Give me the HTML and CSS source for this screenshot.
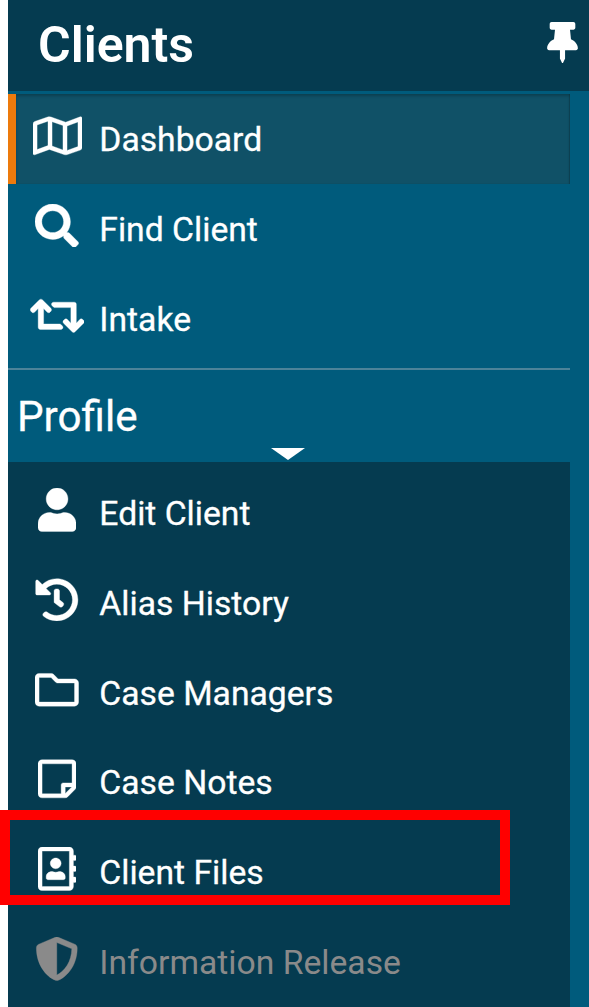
FILE: index.html
```html
<!DOCTYPE html>
<html lang="en">
<head>
<meta charset="utf-8">
<title>Clients</title>
<link rel="stylesheet" href="styles.css">
</head>
<body>
<nav class="sidebar">
  <header class="header">
    <h1 class="title">Clients</h1>
    <svg class="pin" viewBox="0 0 384 512"><path d="M298.028 214.267L285.793 96H328c13.255 0 24-10.745 24-24V24c0-13.255-10.745-24-24-24H56C42.745 0 32 10.745 32 24v48c0 13.255 10.745 24 24 24h42.207L85.972 214.267C37.465 236.82 0 277.261 0 328c0 13.255 10.745 24 24 24h136v104.007c0 1.242.289 2.467.845 3.578l24 48c2.941 5.882 11.364 5.893 14.311 0l24-48a8.008 8.008 0 0 0 .845-3.578V352h136c13.255 0 24-10.745 24-24-.001-51.183-37.983-91.42-85.973-113.733z"/></svg>
  </header>
  <div class="menu">
    <a class="item active"><span class="icon"><svg viewBox="0 0 576 512"><path d="M560.02 32c-1.96 0-3.98.37-5.96 1.16L384.01 96H384L212 35.28A64.252 64.252 0 0 0 191.76 32c-6.69 0-13.37 1.05-19.81 3.14L20.12 87.95A32.006 32.006 0 0 0 0 117.66v346.32C0 473.17 7.53 480 15.99 480c1.96 0 3.97-.37 5.96-1.16L192 416l172 60.71a63.98 63.98 0 0 0 40.05.15l151.83-52.81A31.996 31.996 0 0 0 576 394.34V48.02c0-9.19-7.53-16.02-15.98-16.02zM224 90.42l128 45.19v285.97l-128-45.19V90.42zM48 418.05V129.07l128-44.53v286.2l-.64.23L48 418.05zm480-35.13l-128 44.53V141.26l.64-.24L528 93.95v288.97z"/></svg></span><span class="label">Dashboard</span></a>
    <a class="item"><span class="icon"><svg viewBox="0 0 512 512"><path d="M505 442.7L405.3 343c-4.5-4.5-10.6-7-17-7H372c27.6-35.3 44-79.7 44-128C416 93.1 322.9 0 208 0S0 93.1 0 208s93.1 208 208 208c48.3 0 92.7-16.4 128-44v16.3c0 6.4 2.5 12.5 7 17l99.7 99.7c9.4 9.4 24.6 9.4 33.9 0l28.3-28.3c9.4-9.4 9.4-24.6.1-34zM208 336c-70.7 0-128-57.2-128-128 0-70.7 57.2-128 128-128 70.7 0 128 57.2 128 128 0 70.7-57.2 128-128 128z"/></svg></span><span class="label">Find Client</span></a>
    <a class="item"><span class="icon"><svg viewBox="0 0 640 512"><path d="M629.657 343.598L528.971 444.284c-9.373 9.372-24.568 9.372-33.941 0L394.343 343.598c-9.373-9.373-9.373-24.569 0-33.941l10.823-10.823c9.562-9.562 25.133-9.34 34.419.492L480 342.118V160H292.451a24.005 24.005 0 0 1-16.971-7.029l-16-16C244.361 121.851 255.069 96 276.451 96H520c13.255 0 24 10.745 24 24v222.118l40.416-42.792c9.285-9.831 24.856-10.054 34.419-.492l10.823 10.823c9.372 9.372 9.372 24.569-.001 33.941zm-265.138 15.431A23.999 23.999 0 0 0 347.548 352H160V169.881l40.416 42.792c9.286 9.831 24.856 10.054 34.419.491l10.822-10.822c9.373-9.373 9.373-24.569 0-33.941L144.971 67.716c-9.373-9.373-24.569-9.373-33.941 0L10.343 168.402c-9.373 9.373-9.373 24.569 0 33.941l10.822 10.822c9.562 9.562 25.133 9.34 34.419-.491L96 169.881V392c0 13.255 10.745 24 24 24h243.549c21.382 0 32.09-25.851 16.971-40.971l-16.001-16z"/></svg></span><span class="label">Intake</span></a>
    <section class="section">
      <h2 class="section-title">Profile</h2>
      <svg class="caret" viewBox="0 0 34 12"><path d="M0 0H34L17 12z"/></svg>
    </section>
    <div class="submenu">
      <a class="item"><span class="icon"><svg viewBox="0 0 448 512"><path d="M224 256c70.7 0 128-57.3 128-128S294.7 0 224 0 96 57.3 96 128s57.3 128 128 128zm89.6 32h-16.7c-22.2 10.2-46.9 16-72.9 16s-50.6-5.8-72.9-16h-16.7C60.2 288 0 348.2 0 422.4V464c0 26.5 21.5 48 48 48h352c26.5 0 48-21.5 48-48v-41.6c0-74.2-60.2-134.4-134.4-134.4z"/></svg></span><span class="label">Edit Client</span></a>
      <a class="item"><span class="icon"><svg viewBox="0 0 512 512"><path d="M504 255.531c.253 136.64-111.18 248.372-247.82 248.468-59.015.042-113.223-20.53-155.822-54.911-11.077-8.94-11.905-25.541-1.839-35.607l11.267-11.267c8.609-8.609 22.353-9.551 31.891-1.984C173.062 425.135 212.781 440 256 440c101.705 0 184-82.311 184-184 0-101.705-82.311-184-184-184-48.814 0-93.149 18.969-126.068 49.932l50.754 50.754c10.08 10.08 2.941 27.314-11.313 27.314H24c-8.837 0-16-7.163-16-16V38.627c0-14.254 17.234-21.393 27.314-11.314l49.372 49.372C129.209 34.136 189.552 8 256 8c136.81 0 247.747 110.78 248 247.531zm-180.912 78.784l9.823-12.63c8.138-10.463 6.253-25.542-4.21-33.679L288 256.349V152c0-13.255-10.745-24-24-24h-16c-13.255 0-24 10.745-24 24v135.651l65.409 50.874c10.463 8.137 25.541 6.253 33.679-4.21z"/></svg></span><span class="label">Alias History</span></a>
      <a class="item"><span class="icon"><svg viewBox="0 0 512 512"><path d="M464 128H272l-54.63-54.63c-6-6-14.14-9.37-22.63-9.37H48C21.49 64 0 85.49 0 112v288c0 26.51 21.49 48 48 48h416c26.51 0 48-21.49 48-48V176c0-26.51-21.49-48-48-48zm0 272H48V112h140.12l54.63 54.63c6 6 14.14 9.37 22.63 9.37H464v224z"/></svg></span><span class="label">Case Managers</span></a>
      <a class="item"><span class="icon"><svg viewBox="0 0 448 512"><path d="M448 348.106V80c0-26.51-21.49-48-48-48H48C21.49 32 0 53.49 0 80v351.988c0 26.51 21.49 48 48 48h268.118a48 48 0 0 0 33.941-14.059l83.882-83.882A48 48 0 0 0 448 348.106zm-128 80.005v-76.118h76.118L320 428.111zM400 80v223.988H296c-13.255 0-24 10.745-24 24v104H48V80h352z"/></svg></span><span class="label">Case Notes</span></a>
      <a class="item"><span class="icon"><svg viewBox="0 0 448 512"><path d="M436 160c6.6 0 12-5.4 12-12v-40c0-6.6-5.4-12-12-12h-20V48c0-26.5-21.5-48-48-48H48C21.5 0 0 21.5 0 48v416c0 26.5 21.5 48 48 48h320c26.5 0 48-21.5 48-48v-48h20c6.6 0 12-5.4 12-12v-40c0-6.6-5.4-12-12-12h-20v-64h20c6.6 0 12-5.4 12-12v-40c0-6.6-5.4-12-12-12h-20v-64h20zm-68 304H48V48h320v416zM208 256c35.3 0 64-28.7 64-64s-28.7-64-64-64-64 28.7-64 64 28.7 64 64 64zm-89.6 128h179.2c12.4 0 22.4-8.6 22.4-19.2v-19.2c0-31.8-30.1-57.6-67.2-57.6-10.8 0-18.7 8-44.8 8-26.9 0-33.4-8-44.8-8-37.1 0-67.2 25.8-67.2 57.6v19.2c0 10.6 10 19.2 22.4 19.2z"/></svg></span><span class="label">Client Files</span></a>
      <a class="item disabled"><span class="icon"><svg viewBox="0 0 512 512"><path d="M466.5 83.7l-192-80a48.15 48.15 0 0 0-36.9 0l-192 80C27.7 91.1 16 108.6 16 128c0 198.5 114.5 335.7 221.5 380.3 11.8 4.9 25.1 4.9 36.9 0C360.1 472.6 496 349.3 496 128c0-19.4-11.7-36.9-29.5-44.3zM256.1 446.3l-.1-381 175.9 73.3c-3.3 151.4-82.1 261.1-175.8 307.7z"/></svg></span><span class="label">Information Release</span></a>
    </div>
  </div>
</nav>
<div class="highlight"></div>
</body>
</html>
```
FILE: styles.css
```css
* {
  box-sizing: border-box;
}

body {
  position: relative;
  height: 1007px;
  margin: 0;
  padding-left: 8px;
  overflow: hidden;
  background: #fff;
  font-family: Roboto, "Liberation Sans", sans-serif;
  color: #fff;
}

svg {
  display: block;
  fill: currentColor;
}

.sidebar {
  height: 1007px;
  overflow: hidden;
  background: #005b7c;
}

.header {
  display: flex;
  justify-content: space-between;
  height: 91px;
  padding: 0 11px 0 30px;
  background: #053b50;
}

.title {
  margin: 0;
  font-size: 50px;
  font-weight: 600;
  line-height: 91px;
}

.pin {
  width: 31px;
  height: 41px;
  margin-top: 22px;
}

.menu {
  width: 562px;
  padding-top: 3px;
}

.item {
  display: flex;
  height: 89.8px;
  padding: 20px 0 0 9px;
}

.active {
  padding-left: 1px;
  border-left: 8px solid #ed7a0c;
  background: #105167;
  box-shadow: inset 0 2px 3px rgba(0, 0, 0, 0.22), inset -1px 0 1px rgba(0, 0, 0, 0.15);
}

.icon {
  display: flex;
  flex: none;
  justify-content: center;
  width: 80px;
}

.icon svg {
  height: 43.6px;
  stroke: currentColor;
  stroke-width: 4;
}

.active .icon svg {
  margin-left: 1px;
}

.label {
  padding-left: 2.3px;
  font-size: 33.7px;
  line-height: 51px;
  white-space: nowrap;
  -webkit-text-stroke: 0.3px currentColor;
}

.section {
  display: flex;
  flex-direction: column;
  height: 94px;
  margin-top: 4.6px;
  padding-left: 9px;
  border-top: 2px solid #4c8399;
}

.section-title {
  height: 78px;
  margin: 0;
  font-size: 42.2px;
  font-weight: 400;
  line-height: 94px;
  -webkit-text-stroke: 0.3px currentColor;
}

.caret {
  width: 34px;
  height: 12px;
  margin-left: 254px;
}

.submenu {
  height: 545px;
  padding-top: 6px;
  background: #053b50;
}

.disabled {
  color: #8a8a8a;
}

.disabled .label {
  -webkit-text-stroke: 0;
}

.highlight {
  position: absolute;
  top: 810px;
  left: 0;
  width: 510px;
  height: 95px;
  border: 10px solid #f00;
}
```
